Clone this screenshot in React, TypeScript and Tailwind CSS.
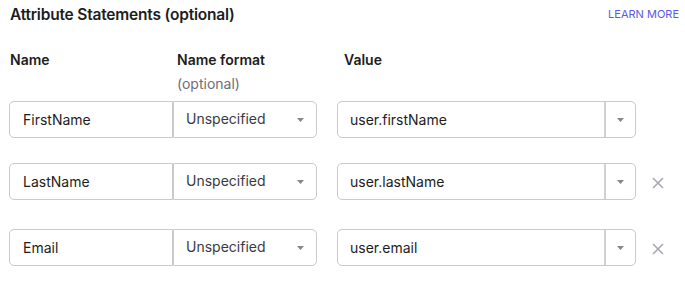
import { useState } from 'react'

type Row = { name: string; format: string; value: string; removable: boolean }

const rows: Row[] = [
  { name: 'FirstName', format: 'Unspecified', value: 'user.firstName', removable: false },
  { name: 'LastName', format: 'Unspecified', value: 'user.lastName', removable: true },
  { name: 'Email', format: 'Unspecified', value: 'user.email', removable: true },
]

function Caret() {
  return (
    <svg width="7" height="4" viewBox="0 0 7 4" className="fill-[#85858f]">
      <path d="M0 0h7L3.5 4z" />
    </svg>
  )
}

function Remove() {
  return (
    <svg width="12" height="12" viewBox="0 0 12 12" className="stroke-[#a7a7b0]" strokeWidth="1.6" fill="none">
      <path d="M1 1l10 10M11 1L1 11" />
    </svg>
  )
}

export default function App() {
  const [items] = useState(rows)

  return (
    <div className="w-[685px] h-[284px] bg-white text-[#1d1d21] font-['Inter',sans-serif] overflow-hidden">
      <div className="flex items-start justify-between pl-[10px] pr-[6px] pt-[3px]">
        <h2 className="text-[15.5px] leading-6 font-semibold tracking-[-0.2px]">Attribute Statements (optional)</h2>
        <a className="text-[11px] leading-5 text-[#5a5ae6] mt-[1px]">LEARN MORE</a>
      </div>

      <div className="flex mt-[23px] text-[14px] leading-5 font-semibold">
        <div className="w-[177px] pl-[10px]">Name</div>
        <div className="w-[167px]">
          Name format
          <div className="font-normal text-[#6e6e78] mt-1">(optional)</div>
        </div>
        <div>Value</div>
      </div>

      <div className="pl-[9px]">
        {items.map((r, i) => (
          <div
            key={r.name}
            className={`flex items-center h-[37px] ${i === 0 ? 'mt-[7px]' : i === 1 ? 'mt-[25px]' : 'mt-[29px]'}`}
          >
            <div className="w-[164px] h-full flex items-center border border-[#c9c9ce] rounded-l-[5px] pl-[13px] text-[14px]">
              {r.name}
            </div>
            <div className="w-[144px] h-full flex items-center justify-between border border-[#c9c9ce] rounded-r-[5px] pl-[12px] pr-[12px] text-[14px] text-[#3a3a42]">
              <span className="-mt-[2px]">{r.format}</span>
              <Caret />
            </div>
            <div className="ml-[20px] w-[299px] h-full flex border border-[#c9c9ce] rounded-[5px] text-[14px]">
              <div className="flex-1 flex items-center pl-[12px]">{r.value}</div>
              <div className="w-[31px] border-l-2 border-[#d0d0d5] flex items-center justify-center">
                <Caret />
              </div>
            </div>
            {r.removable && (
              <div className="ml-[16px] mt-[3px] flex items-center">
                <Remove />
              </div>
            )}
          </div>
        ))}
      </div>
    </div>
  )
}
